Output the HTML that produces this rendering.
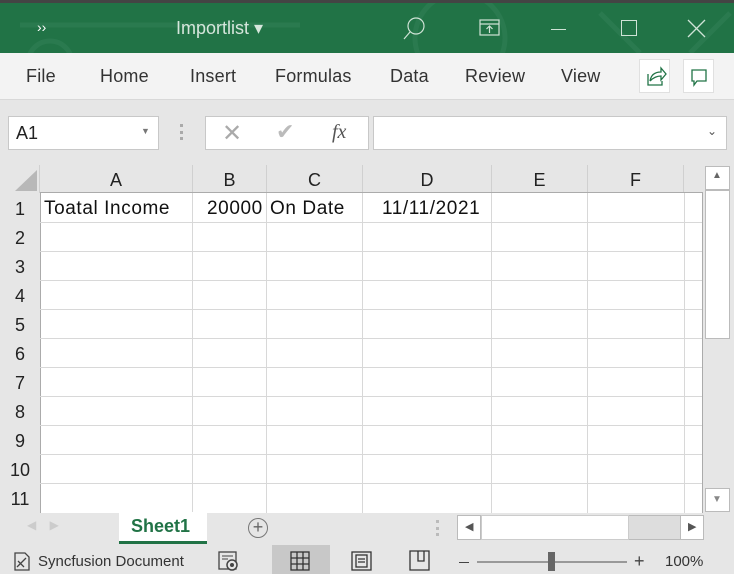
<!DOCTYPE html>
<html><head><style>
*{margin:0;padding:0;box-sizing:border-box}
body{width:734px;height:574px;overflow:hidden;background:#e6e6e6;font-family:"Liberation Sans",sans-serif;position:relative;color:#222}
.a{position:absolute}
.t{position:absolute;top:0;left:0;width:734px;height:53px;background:#217346;border-top:3px solid #444}
.rib{top:53px;left:0;width:734px;height:47px;background:#f3f3f3;border-bottom:1px solid #d8d8d8}
.tab{top:66px;font-size:18px;color:#333;letter-spacing:.2px}
.box{background:#fff;border:1px solid #c8c8c8}
.col{top:165px;height:28px;font-size:18px;text-align:center;line-height:30px;border-right:1px solid #d0d0d0;color:#222}
.rn{left:0;width:40px;height:29px;font-size:18px;text-align:center;line-height:32px;color:#222}
.cell{font-size:19px;line-height:32px;color:#111;letter-spacing:.6px}
</style></head><body>
<div class="t">
 <svg class="a" style="left:0;top:0" width="734" height="50"><g stroke="#2a7a4f" stroke-width="5" fill="none"><path d="M20 22H300"/><circle cx="460" cy="35" r="45"/><path d="M600 10l40 40M690 50l40-40"/><circle cx="50" cy="60" r="22"/></g></svg>
 <div class="a" style="left:37px;top:16px;color:#fff;font-size:14px">››</div>
 <div class="a" style="left:176px;top:15px;color:#d6e6dc;font-size:18px">Importlist ▾</div>
 <svg class="a" style="left:400px;top:12px" width="30" height="30"><circle cx="16" cy="11" r="8" stroke="#cfe3d6" stroke-width="1.2" fill="none"/><path d="M10 17L4 24" stroke="#cfe3d6" stroke-width="1.2"/></svg>
 <svg class="a" style="left:478px;top:14px" width="24" height="24"><rect x="2" y="3" width="19" height="15" stroke="#cfe3d6" stroke-width="1.2" fill="none"/><path d="M2 7H21M11.5 16V9M8.5 12l3-3 3 3" stroke="#cfe3d6" stroke-width="1.2" fill="none"/></svg>
 <div class="a" style="left:551px;top:26px;width:15px;height:1.3px;background:#cfe3d6"></div>
 <div class="a" style="left:621px;top:17px;width:16px;height:16px;border:1.3px solid #cfe3d6"></div>
 <svg class="a" style="left:686px;top:15px" width="22" height="22"><path d="M2 2L19 19M19 2L2 19" stroke="#cfe3d6" stroke-width="1.3"/></svg>
</div>
<div class="a rib"></div>
<div class="a tab" style="left:26px">File</div>
<div class="a tab" style="left:100px">Home</div>
<div class="a tab" style="left:190px">Insert</div>
<div class="a tab" style="left:275px">Formulas</div>
<div class="a tab" style="left:390px">Data</div>
<div class="a tab" style="left:465px">Review</div>
<div class="a tab" style="left:561px">View</div>
<div class="a box" style="left:639px;top:59px;width:31px;height:34px;border-color:#e0e0e0"><svg width="30" height="32"><path d="M8 14v11h14v-4M10 21c1-6 5-9 11-9v-4l5 6-5 6v-4c-5 0-8 2-11 5" stroke="#217346" stroke-width="1.3" fill="none"/></svg></div>
<div class="a box" style="left:683px;top:59px;width:31px;height:34px;border-color:#e0e0e0"><svg width="30" height="32"><path d="M8 10h14v11h-9l-3 4v-4h-2z" stroke="#217346" stroke-width="1.3" fill="none"/></svg></div>

<div class="a box" style="left:8px;top:116px;width:151px;height:34px"><span class="a" style="left:7px;top:6px;font-size:18px">A1</span><span class="a" style="left:132px;top:9px;font-size:9px;color:#777">▼</span></div>
<div class="a" style="left:180px;top:124px;width:3px;height:16px;border-left:3px dotted #aaa"></div>
<div class="a box" style="left:205px;top:116px;width:164px;height:34px"><span class="a" style="left:16px;top:2px;font-size:24px;color:#aaa">✕</span><span class="a" style="left:70px;top:2px;font-size:22px;color:#bbb">✔</span><span class="a" style="left:126px;top:4px;font-size:20px;font-family:'Liberation Serif',serif;font-style:italic;color:#555">fx</span></div>
<div class="a box" style="left:373px;top:116px;width:354px;height:34px"><span class="a" style="left:333px;top:7px;font-size:12px;color:#555">⌄</span></div>

<svg class="a" style="left:12px;top:168px" width="26" height="24"><path d="M25 2V23H3z" fill="#b8b8b8"/></svg>
<div class="a" style="left:39px;top:165px;width:1px;height:28px;background:#d0d0d0"></div>
<div class="a col" style="left:40px;width:153px">A</div>
<div class="a col" style="left:193px;width:74px">B</div>
<div class="a col" style="left:267px;width:96px">C</div>
<div class="a col" style="left:363px;width:129px">D</div>
<div class="a col" style="left:492px;width:96px">E</div>
<div class="a col" style="left:588px;width:96px">F</div>

<svg class="a" style="left:40px;top:192px" width="664" height="321">
<rect x="0.5" y="0.5" width="662" height="330" fill="#fff" stroke="#ababab"/>
<g stroke="#d8d8d8">
<path d="M0 30.5H662M0 59.5H662M0 88.5H662M0 117.5H662M0 146.5H662M0 175.5H662M0 204.5H662M0 233.5H662M0 262.5H662M0 291.5H662"/>
<path d="M152.5 1V321M226.5 1V321M322.5 1V321M451.5 1V321M547.5 1V321M644.5 1V321"/>
</g></svg>
<div class="a rn" style="top:193px">1</div><div class="a rn" style="top:222px">2</div><div class="a rn" style="top:251px">3</div><div class="a rn" style="top:280px">4</div><div class="a rn" style="top:309px">5</div><div class="a rn" style="top:338px">6</div><div class="a rn" style="top:367px">7</div><div class="a rn" style="top:396px">8</div><div class="a rn" style="top:425px">9</div><div class="a rn" style="top:454px">10</div><div class="a rn" style="top:483px">11</div>
<div class="a cell" style="left:44px;top:193px">Toatal Income</div>
<div class="a cell" style="left:207px;top:193px">20000</div>
<div class="a cell" style="left:270px;top:193px">On Date</div>
<div class="a cell" style="left:382px;top:193px">11/11/2021</div>

<div class="a box" style="left:705px;top:166px;width:25px;height:24px;border-color:#bbb"><span class="a" style="left:6px;top:3px;font-size:10px;color:#666">▲</span></div>
<div class="a box" style="left:705px;top:190px;width:25px;height:149px;border-color:#bbb"></div>
<div class="a box" style="left:705px;top:488px;width:25px;height:24px;border-color:#bbb"><span class="a" style="left:6px;top:5px;font-size:10px;color:#888">▼</span></div>

<span class="a" style="left:27px;top:518px;font-size:12px;color:#ccc">◀ &nbsp;&nbsp; ▶</span>
<div class="a" style="left:119px;top:512px;width:88px;height:32px;background:#fff;border-bottom:3px solid #217346"><span class="a" style="left:12px;top:4px;font-size:18px;font-weight:bold;color:#217346">Sheet1</span></div>
<div class="a" style="left:248px;top:518px;width:20px;height:20px;border:1.3px solid #777;border-radius:50%;text-align:center;line-height:17px;font-size:18px;color:#666">+</div>
<div class="a" style="left:436px;top:520px;width:3px;height:16px;border-left:3px dotted #bbb"></div>
<div class="a box" style="left:457px;top:515px;width:247px;height:25px;background:#ddd;border-color:#bbb"></div>
<div class="a box" style="left:457px;top:515px;width:24px;height:25px;border-color:#bbb"><span class="a" style="left:7px;top:4px;font-size:11px;color:#555">◀</span></div>
<div class="a box" style="left:481px;top:515px;width:148px;height:25px;border-color:#ccc"></div>
<div class="a box" style="left:680px;top:515px;width:24px;height:25px;border-color:#bbb"><span class="a" style="left:7px;top:4px;font-size:11px;color:#555">▶</span></div>

<svg class="a" style="left:12px;top:551px" width="20" height="20"><path d="M3 2h10l4 4v13H3z" fill="none" stroke="#444" stroke-width="1.3"/><path d="M5 16l9-9M6 10l6 6" stroke="#444" stroke-width="1.3"/></svg>
<span class="a" style="left:38px;top:553px;font-size:15px;color:#333">Syncfusion Document</span>
<svg class="a" style="left:218px;top:550px" width="24" height="22"><rect x="1" y="2" width="17" height="17" fill="none" stroke="#444" stroke-width="1.3"/><path d="M4 6h11M4 9h6" stroke="#444"/><circle cx="14" cy="15" r="5" fill="#e6e6e6" stroke="#444" stroke-width="1.5"/><circle cx="14" cy="15" r="2" fill="#444"/></svg>
<div class="a" style="left:272px;top:545px;width:58px;height:29px;background:#c8c8c8"></div>
<svg class="a" style="left:290px;top:551px" width="20" height="20"><g fill="none" stroke="#333" stroke-width="1.3"><rect x="1" y="1" width="18" height="18"/><path d="M7 1v18M13 1v18M1 7h18M1 13h18"/></g></svg>
<svg class="a" style="left:351px;top:551px" width="22" height="20"><g fill="none" stroke="#333" stroke-width="1.3"><rect x="1" y="1" width="19" height="18"/><rect x="5" y="4" width="11" height="12"/><path d="M7 8h7M7 11h7"/></g></svg>
<svg class="a" style="left:409px;top:550px" width="22" height="21"><g fill="none" stroke="#333" stroke-width="1.3"><path d="M1 1h19v19H1zM9 1v10h6V1"/></g></svg>
<div class="a" style="left:459px;top:562px;width:10px;height:1.3px;background:#444"></div>
<div class="a" style="left:477px;top:561px;width:150px;height:2px;background:#999"></div>
<div class="a" style="left:548px;top:552px;width:7px;height:19px;background:#666"></div>
<span class="a" style="left:634px;top:551px;font-size:18px;color:#444">+</span>
<span class="a" style="left:665px;top:553px;font-size:15px;color:#333">100%</span>
</body></html>
